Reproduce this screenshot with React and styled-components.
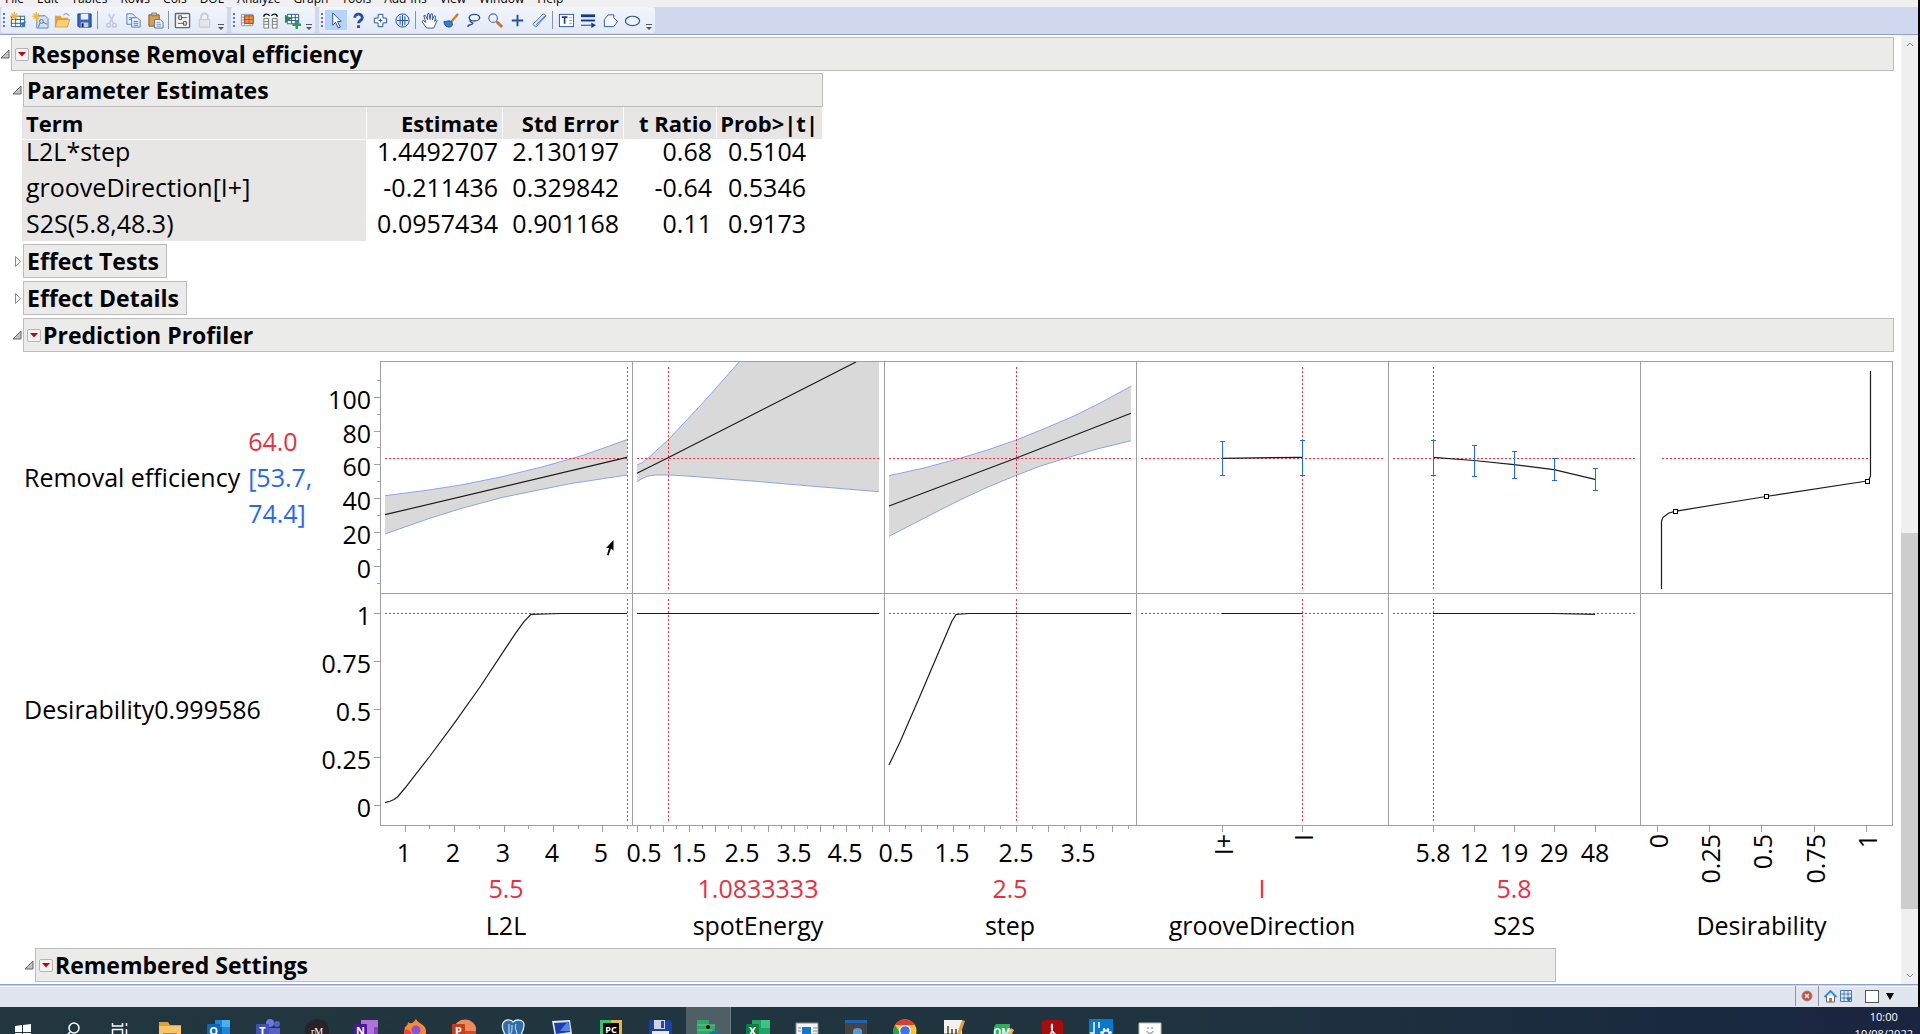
import React from "react";
import styled, { createGlobalStyle, css } from "styled-components";

const ui = `"Open Sans", "Noto Sans", "Liberation Sans", sans-serif`;

const Global = createGlobalStyle`
  * { box-sizing: border-box; }
  body { margin: 0; background: #fff; color: #000; font-family: ${ui}; }
  button { font: inherit; color: inherit; background: none; border: 0; padding: 0; margin: 0; }
`;

const Window = styled.div`
  display: flex;
  flex-direction: column;
  height: 100vh;
  overflow: hidden;
`;
const AppFrame = styled.div`
  flex: 1;
  min-height: 0;
  display: flex;
  flex-direction: column;
  border-right: 2px solid #000;
`;

/* menu and tool bars */
const MenuBar = styled.nav`
  flex: none;
  display: flex;
  align-items: flex-end;
  gap: 13px;
  height: 7px;
  padding-left: 5px;
  overflow: hidden;
  background: #f0f0f0;
`;
const MenuItem = styled.button`
  font-size: 12px;
  line-height: 16px;
`;
const ToolBar = styled.div`
  flex: none;
  display: flex;
  gap: 4px;
  height: 28px;
  padding: 0 1px;
  background: #cfd8ee;
  border-bottom: 1px solid #8f9fd0;
`;
const ToolGroup = styled.div`
  display: flex;
  align-items: center;
  height: 26px;
  background: linear-gradient(#f1f5fc, #e3eaf6);
  border-radius: 3px;
`;
const Grip = styled.span`
  width: 2px;
  height: 14px;
  margin: 0 2px;
  background: repeating-linear-gradient(#6d7a94 0 2px, transparent 2px 4px);
`;
const Divider = styled.span`
  width: 1px;
  height: 18px;
  margin: 0 2px;
  background: #8d93a5;
`;
const ToolButton = styled.button`
  display: grid;
  place-items: center;
  width: 22px;
  height: 20px;
  ${(p) => p.$active && css`background: #b7d3f8;`}
  ${(p) => p.$dim && css`opacity: 0.45;`}
`;
const More = styled.button`
  display: grid;
  place-items: center;
  align-self: flex-end;
  width: 12px;
  height: 12px;
`;

/* report */
const Body = styled.div`
  flex: 1;
  min-height: 0;
  display: flex;
`;
const Report = styled.main`
  flex: 1;
  min-width: 0;
  overflow: hidden;
  padding: 2px 7px 0 0;
`;
const Section = styled.section`
  display: flex;
  flex-direction: column;
  gap: ${(p) => (p.$indent ? 3 : 2)}px;
  padding-left: ${(p) => p.$indent || 0}px;
`;
const Outline = styled.div`
  display: flex;
  align-items: center;
  width: ${(p) => p.$width || "auto"};
`;
const Disclosure = styled.button`
  flex: none;
  display: grid;
  place-items: center end;
  width: 11px;
  height: 20px;
  padding-right: 1px;
`;
const OutlineBar = styled.div`
  flex: ${(p) => (p.$fit ? "none" : 1)};
  display: flex;
  align-items: center;
  gap: 2px;
  height: 34px;
  padding: 0 ${(p) => (p.$fit ? 7 : 3)}px 0 3px;
  background: #ebebea;
  border: 1px solid #bcbcbc;
`;
const Title = styled.h2`
  margin: 0;
  font-size: 23px;
  line-height: 32px;
  font-weight: 700;
  white-space: nowrap;
`;
const RedTriangle = styled.button`
  display: grid;
  place-items: center;
  width: 14px;
  height: 13px;
  border: 1px solid #b4b4b4;
  border-radius: 2px;
  background: #f3f3f3;
`;

const Estimates = styled.table`
  width: 800px;
  margin: -3px 0 0 10px;
  table-layout: fixed;
  border-collapse: separate;
  border-spacing: 0;
  font-size: 25px;
`;
const Head = styled.th`
  height: 33px;
  padding: 1px 4px 1px 0;
  background: #e8e6e4;
  border-left: 1px solid #fff;
  border-bottom: 1px solid #fff;
  font-size: 22px;
  line-height: 30px;
  text-align: right;
  white-space: nowrap;
  &:first-child { text-align: left; padding-left: 4px; border-left: 0; }
`;
const Term = styled.th`
  padding: 7px 0 6px 4px;
  line-height: 23px;
  font-weight: 400;
  text-align: left;
  background: #e8e6e4;
`;
const Value = styled.td`
  padding: 7px ${(p) => (p.$last ? 16 : 4)}px 6px 0;
  line-height: 23px;
  text-align: right;
`;
const Row = styled.tr`
  &:first-child > * { padding-top: 0; }
`;

/* profiler */
const Profiler = styled.div`
  display: grid;
  grid-template-columns: 219px 137px minmax(0, 1fr);
  margin: 6px 1px 1px 12px;
  font-size: 25px;
`;
const Response = styled.div`
  display: flex;
  align-items: center;
  gap: 8px;
  height: 232px;
  line-height: 36px;
  white-space: nowrap;
`;
const Interval = styled.div`
  display: flex;
  flex-direction: column;
`;
const Current = styled.span`
  color: #ee2e3e;
`;
const Bounds = styled.span`
  color: #2468f2;
`;
const LeftLabels = styled.div`
  grid-column: 1;
`;
const Scale = styled.svg`
  display: block;
  width: 100%;
  height: 464px;
  text { font: 25px ${ui}; text-anchor: end; }
  path { stroke: #a0a0a0; }
`;
const Columns = styled.div`
  display: grid;
  grid-template-columns: repeat(6, minmax(0, 1fr));
  padding-right: 1px;
`;
const Column = styled.div`
  &:last-child { margin-right: -1px; }
  &:last-child > svg { border-right: 1px solid #a0a0a0; }
  &:last-child > svg:nth-of-type(3) { border-right: 0; }
`;
const Plot = styled.svg`
  display: block;
  width: 100%;
  height: 232px;
  border: solid #a0a0a0;
  border-width: 1px 0 0 1px;
  * { vector-effect: non-scaling-stroke; }
  .band { fill: #d9d9d9; }
  .edge { fill: none; stroke: #8aa6e8; }
  .fit { fill: none; stroke: #1c1c1c; stroke-width: 1.2; }
  .now { fill: none; stroke: #ee2e3e; stroke-dasharray: 2 2; shape-rendering: crispEdges; }
  .error { fill: none; stroke: #2468f2; shape-rendering: crispEdges; }
  .handle { fill: #fff; stroke: #000; shape-rendering: crispEdges; }
`;
const Axis = styled.svg`
  display: block;
  width: 100%;
  height: 45px;
  overflow: visible;
  border-top: 1px solid #a0a0a0;
  text { font: 25px ${ui}; text-anchor: middle; }
  .turned { text-anchor: end; }
  line { stroke: #a0a0a0; shape-rendering: crispEdges; }
`;
const Factor = styled.div`
  display: flex;
  flex-direction: column;
  align-items: center;
  justify-content: flex-end;
  min-height: 74px;
  line-height: 37px;
  ${(p) => p.$last && css`padding-right: 10px;`}
`;

/* scroll, status and task bars */
const ScrollTrack = styled.div`
  flex: none;
  display: flex;
  flex-direction: column;
  justify-content: space-between;
  align-items: center;
  width: 17px;
  background: #f0f0f0;
`;
const ScrollThumb = styled.div`
  width: 17px;
  height: 376px;
  margin-top: auto;
  margin-bottom: 58px;
  background: #cdcdcd;
`;
const ScrollButton = styled.button`
  flex: none;
  display: grid;
  place-items: center;
  width: 17px;
  height: 17px;
`;
const StatusBar = styled.footer`
  flex: none;
  display: flex;
  justify-content: flex-end;
  align-items: center;
  height: 23px;
  padding-right: 17px;
  background: #e1e5ee;
  border-top: 1px solid #8f9fd0;
  box-shadow: inset 0 1px #c9d1e8, inset 0 2px #f4f6fb;
`;
const StatusCell = styled.div`
  display: flex;
  align-items: center;
  gap: 2px;
  height: 20px;
  padding: 0 4px;
  border-left: 1px solid #8d93a5;
`;
const StatusButton = styled.button`
  display: grid;
  place-items: center;
  width: 14px;
  height: 16px;
`;
const StatusCheck = styled.input`
  appearance: none;
  width: 14px;
  height: 13px;
  margin: 0 2px 0 10px;
  background: #fff;
  border: 1px solid #555;
`;
const TaskBar = styled.div`
  flex: none;
  display: flex;
  justify-content: space-between;
  height: 27px;
  overflow: hidden;
  background: linear-gradient(90deg, #22363f, #20343f 60%, #1a2840 90%, #1a2540);
`;
const Apps = styled.div`
  display: flex;
  gap: 4px;
`;
const AppButton = styled.button`
  width: 45px;
  height: 40px;
  padding-top: 8px;
  ${(p) => p.$active && css`background: #4e6065; border-right: 1px solid #6d7a7e;`}
  svg { display: block; margin: 0 auto; }
`;
const Clock = styled.div`
  display: flex;
  flex-direction: column;
  align-items: center;
  padding: 1px 7px 0 0;
  color: #fff;
  font-size: 11px;
  line-height: 17px;
`;

const Svg = ({ s = 18, children }) => (
  <svg width={s} height={s} viewBox="0 0 18 18" fill="none" aria-hidden="true">{children}</svg>
);
const grid = <path d="M1.500 4.500h14v11h-14zM1.500 8h14M1.500 12h14M6 4.500v11M11 4.500v11" fill="#fff" stroke="#2b5a9e" />;
const spark = <path d="M4.500 0v9M0 4.500h9M1.500 1.500l6 6M7.500 1.500l-6 6" stroke="#f0b53a" strokeWidth="1.300" />;

const tools = {
  newTable: <>{grid}{spark}<path d="M10 12l7-2-3 6z" fill="#1f7ec9" /></>,
  newScript: <><path d="M5 4h9l3 3v10H5z" fill="#cfe0f7" stroke="#5a87bd" />{spark}<circle cx="10" cy="10" r="2" stroke="#667" /><path d="M12 11l4 2M8 12l-1 4" stroke="#667" /></>,
  open: <><path d="M1 4h6l1 2h7v10H1z" fill="#e0a33c" /><path d="M4 8h13l-3 8H1z" fill="#f8cf74" stroke="#c58a2b" strokeWidth=".6" /><path d="M10 3c3-2 5-1 6 1" stroke="#777" /></>,
  save: <><path d="M2 2h14v14H3l-1-1z" fill="#3463c4" stroke="#1c3f93" /><path d="M5 2h8v6H5z" fill="#e9f1fd" /><path d="M5 11h8v5H5z" fill="#c3cbdc" /><path d="M6 12h2v4H6z" fill="#223" /></>,
  cut: <><path d="M6 2l5 10M12 2L7 12" stroke="#8d9bb5" strokeWidth="1.600" /><circle cx="6" cy="14" r="2" stroke="#8d9bb5" strokeWidth="1.500" /><circle cx="12" cy="14" r="2" stroke="#8d9bb5" strokeWidth="1.500" /></>,
  copy: <><path d="M2 2h6l3 3v8H2z" fill="#e7f0fc" stroke="#4f7dbd" /><path d="M7 6h6l3 3v7H7z" fill="#e7f0fc" stroke="#4f7dbd" /><path d="M9 10h5M9 12h5M9 14h5M4 6h3M4 8h3" stroke="#4f7dbd" /></>,
  paste: <><path d="M2 3h11v12H2z" fill="#d99f4a" stroke="#8a5a1d" /><path d="M5 1h5v3H5z" fill="#bbb" stroke="#666" strokeWidth=".7" /><path d="M8 8h6l3 3v6H8z" fill="#f2f6fd" stroke="#55709c" /><path d="M10 11h4M10 13h5M10 15h5" stroke="#7590b8" /></>,
  prefs: <><rect x="1.500" y="1.500" width="15" height="15" rx="1" fill="#fafafa" stroke="#666" strokeWidth="1.500" /><path d="M4 6h10M4 12h10" stroke="#555" /><path d="M5 4h3v4H5zM10 10h3v4h-3z" fill="#ddd" stroke="#555" /></>,
  lock: <><path d="M5.500 8V5a3.500 3.500 0 017 0v3" stroke="#9a9a9a" strokeWidth="1.700" /><path d="M3.500 8h11v8h-11z" fill="#ddd" stroke="#9a9a9a" /></>,
  subset: <><path d="M1.500 2.500h12v12h-12zM1.500 5.500h12M1.500 8.500h12M1.500 11.500h12M4.500 2.500v12M10.500 2.500v12" fill="#fff" stroke="#8a98b5" /><rect x="5" y="4" width="9" height="8" fill="#f0913e" stroke="#a33f12" /><path d="M9.500 4v8M5 8h9" stroke="#c3561c" /></>,
  join: <><path d="M2 7h5v10H2zM11 7h5v10h-5z" fill="#fff" stroke="#777" /><path d="M2 10h5M2 13h5M11 10h5M11 13h5" stroke="#777" /><path d="M2 5c0-4 5-3 6-1M16 5c0-4-5-3-6-1" stroke="#111" strokeWidth="1.500" /></>,
  addGraph: <><path d="M3.500 2.500h12v10h-12zM3.500 6h12M3.500 9h12M8 2.500v10M12 2.500v10" fill="#fff" stroke="#2b5a9e" /><path d="M1 3l7 4-7 5z" fill="#2c8a57" /><path d="M13.500 9v9M9 13.500h9" stroke="#2f9a4d" strokeWidth="2.600" /></>,
  arrow: <path d="M5 1v13l3-3 3 6 2-1-3-6h4z" fill="#fff" stroke="#1c4e9d" />,
  help: <path d="M5 6c0-5 8-5 8 0 0 3-4 3-4 6M9 14v3" stroke="#1f4fa8" strokeWidth="3" />,
  plusBox: <path d="M6.500 2.500h5v4h4v5h-4v4h-5v-4h-4v-5h4z M7 9h4M9 7v4" fill="#fff" stroke="#1f4fa8" />,
  globe: <><circle cx="9" cy="9" r="7" fill="#e5edfb" stroke="#1f4fa8" /><path d="M9 3v12M3 9h12M6.500 4.500v9M11.500 4.500v9" stroke="#1f4fa8" /></>,
  hand: <path d="M6 17l-5-7 1.500-1L5 11 3 4l1.500-.5L7 8V2l1.500-.5L9.500 8l1-6H12v6.500L14 4l1.500.5L14.500 10l1.500-2 1 1-3.500 8z" fill="#fff" stroke="#2b57a5" />,
  brush: <><path d="M9 10l7-8" stroke="#c8842e" strokeWidth="2.500" /><path d="M1 10c3 1 4-2 8 0 2 3 1 6-3 6-3 0-5-3-5-6z" fill="#2f7fd6" stroke="#1c4e9d" /></>,
  lasso: <><ellipse cx="10" cy="6" rx="5.500" ry="3.500" stroke="#2b4f9e" strokeWidth="1.500" /><path d="M5 8c0 4 6 3 2 5-2 1-4 0-4 3" stroke="#2b4f9e" strokeWidth="1.500" /></>,
  zoom: <><circle cx="6.500" cy="6.500" r="4.500" fill="#eaf3fd" stroke="#5577a5" strokeWidth="1.300" /><path d="M10 10l6 6" stroke="#c8702e" strokeWidth="3" /></>,
  cross: <path d="M9 3v12M3 9h12" stroke="#1f4fa8" strokeWidth="2" />,
  ruler: <path d="M2 13L13 2l3 2L5 16z M5 14L15 4" fill="#dbe7fa" stroke="#4a74ba" />,
  textBox: <><rect x="1.500" y="2.500" width="15" height="13" fill="#fff" stroke="#2b57a5" /><path d="M4 5.500h6M7 5.500v7" stroke="#1c3f93" strokeWidth="1.800" /><path d="M12 6h3M12 9h3M12 12h3" stroke="#8aa3cf" /></>,
  lines: <><path d="M1 4h15" stroke="#123a8a" strokeWidth="3" /><path d="M1 9h15" stroke="#123a8a" strokeWidth="2" /><path d="M1 14h12" stroke="#123a8a" /><path d="M12 11l5 3-5 3z" fill="#123a8a" /></>,
  polygon: <path d="M2.500 15.500V8l4-5h6v3l4 4-4 5.500z" fill="#f4f8fe" stroke="#2b57a5" />,
  oval: <ellipse cx="9" cy="9.500" rx="7.500" ry="5" fill="#eef4fd" stroke="#2b57a5" strokeWidth="1.300" />,
};

const Tool = ({ name, ...rest }) => (
  <ToolButton type="button" aria-label={name} {...rest}><Svg s={17}>{tools[name]}</Svg></ToolButton>
);
const Overflow = () => (
  <More type="button" aria-label="More buttons">
    <svg width="8" height="8"><path d="M1 1.500h6" stroke="#555" /><path d="M1 4h6L4 7z" fill="#555" /></svg>
  </More>
);

const OutlineRow = ({ title, closed, menu, fit, width }) => (
  <Outline $width={width}>
    <Disclosure type="button" aria-label={`Toggle ${title}`}>
      {closed ? (
        <svg width="8" height="13"><path d="M1.500 1.500v10l5-5z" fill="#fff" stroke="#8a8a8a" /></svg>
      ) : (
        <svg width="10" height="10"><path d="M1 9h8V1z" fill="#bfc3c3" stroke="#666" /></svg>
      )}
    </Disclosure>
    <OutlineBar $fit={fit}>
      {menu && (
        <RedTriangle type="button" aria-label={`${title} options`}>
          <svg width="8" height="5"><path d="M0 0h8L4 4.500z" fill="#b40c0c" /></svg>
        </RedTriangle>
      )}
      <Title>{title}</Title>
    </OutlineBar>
  </Outline>
);

const estimates = [
  ["L2L*step", "1.4492707", "2.130197", "0.68", "0.5104"],
  ["grooveDirection[I+]", "-0.211436", "0.329842", "-0.64", "0.5346"],
  ["S2S(5.8,48.3)", "0.0957434", "0.901168", "0.11", "0.9173"],
];

/* Plot coordinates: each cell is 252 x 232 units, measured from its border. */
const every = (first, step, count) => Array.from({ length: count }, (_, i) => first + step * i);
const L = (points) => "M" + points.map((p) => p.join(" ")).join("L");

const factors = [
  {
    name: "L2L", value: "5.5", now: 247.500,
    upper: [[5, 134.700], [44, 129.700], [81, 124], [122, 115.700], [163, 105.700], [204, 94], [247, 78.700]],
    lower: [[5, 173], [49, 157.500], [81, 147.500], [122, 136.500], [151, 130.500], [191, 122.500], [247, 114]],
    fit: [[5, 153.700], [247, 96.300]],
    desire: [[5, 209.700], [10, 208.300], [14, 206.500], [18, 203.500], [25, 195], [50, 163], [74, 130.700], [100, 94], [124, 57.700], [136, 39.700], [144, 28.700], [151, 21.300], [165, 21], [180, 20.500], [247, 20.500]],
    major: every(25.500, 49.250, 5), minor: every(49.500, 49.500, 5),
    labels: [[24, "1"], [73, "2"], [123, "3"], [172, "4"], [221, "5"]],
  },
  {
    name: "spotEnergy", value: "1.0833333", now: 36.500,
    upper: [[5, 104], [10, 101.700], [16, 97.300], [37, 78], [71, 41.700], [108, 0], [247, 0]],
    lower: [[5, 120.700], [10, 117.700], [16, 115], [24, 114], [39, 114], [59, 115.300], [120, 120], [182, 125.300], [247, 130.700]],
    fit: [[5, 112.300], [37, 96.300], [224, 1]],
    desire: [[5, 20.500], [247, 20.500]],
    major: every(5.500, 26.120, 10), minor: every(18.500, 26.120, 9),
    labels: [[12, "0.5"], [57, "1.5"], [110, "2.5"], [162, "3.5"], [213, "4.5"]],
  },
  {
    name: "step", value: "2.5", now: 132.500,
    upper: [[5, 114.700], [40, 107], [76, 97.300], [105, 88.500], [133, 78.700], [160, 67.800], [190, 55], [218, 41], [247, 25.300]],
    lower: [[5, 175.300], [56, 149], [80, 137], [105, 125.500], [133, 114], [155, 105.500], [179, 98], [213, 88], [247, 79.700]],
    fit: [[5, 145], [133, 96.700], [247, 52.300]],
    desire: [[5, 172], [16, 149], [36, 103], [56, 56], [68, 28], [72, 21.500], [85, 20.500], [247, 20.500]],
    major: every(5.500, 31.800, 8), minor: every(21.500, 31.800, 8),
    labels: [[12, "0.5"], [68, "1.5"], [132, "2.5"], [194, "3.5"]],
  },
  {
    name: "grooveDirection", value: "I", now: 166.500, turned: true,
    bars: [[86.500, 80.500, 114.500], [166.500, 79.500, 114.500]],
    fit: [[86, 97.300], [166, 96.300]],
    desire: [[86, 20.500], [166, 20.500]],
    major: [86.500, 166.500], minor: [], labels: [[86, "I+"], [166, "I"]],
  },
  {
    name: "S2S", value: "5.8", now: 45.500,
    bars: [[45.500, 79.500, 114.500], [86.500, 84.500, 115.500], [126.500, 90.500, 117.500], [166.500, 97.500, 119.500], [207.500, 107.500, 129.500]],
    fit: [[45, 96.300], [86, 99.500], [126, 103.700], [166, 108.700], [207, 118.300]],
    desire: [[45, 20.500], [166, 20.500], [207, 21.300]],
    major: [45.500, 86.500, 126.500, 166.500, 207.500], minor: [],
    labels: [[45, "5.8"], [86, "12"], [126, "19"], [166, "29"], [207, "48"]],
  },
  {
    name: "Desirability", turned: true,
    curve: [[230.500, 10], [230.500, 115], [229, 118.500], [227, 120], [126, 135.500], [35, 150.300], [29, 152], [23, 156.300], [21.500, 160], [21.500, 228]],
    handles: [[227, 120.500], [126, 135.500], [35, 150.500]],
    major: [17.500, 69.500, 121.500, 173.500, 225.500], minor: [],
    labels: [[17, "0"], [69, "0.25"], [121, "0.5"], [173, "0.75"], [225, "1"]],
  },
];

const pct = (x) => `${(x / 252) * 100}%`;
const box = { viewBox: "1 1 251 231", preserveAspectRatio: "none", "aria-hidden": true };

const FactorColumn = ({ f }) => (
  <Column>
    <Plot {...box}>
      {f.upper && <path className="band" d={L([...f.upper, ...[...f.lower].reverse()]) + "Z"} />}
      {f.upper && <path className="edge" d={L(f.upper) + L(f.lower)} />}
      <path className="now" d={f.curve ? "M22 97.500H230" : "M5 97.500H247"} />
      {f.now && <path className="now" d={`M${f.now} 6V228`} />}
      {f.fit && <path className="fit" d={L(f.fit)} />}
      {f.curve && <path className="fit" d={L(f.curve)} />}
      {f.bars && f.bars.map(([x, a, b]) => (
        <path key={x} className="error" d={`M${x} ${a}V${b}M${x - 2.5} ${a}h5M${x - 2.5} ${b}h5`} />
      ))}
      {f.handles && f.handles.map(([x, y]) => (
        <rect key={x} className="handle" x={x - 2} y={y - 2} width="4" height="4" />
      ))}
      {f.name === "L2L" && <path d="M233.500 179v10.500l-2.500-2-2.500 7-1.500-.5 2-7h-3z" fill="#000" />}
    </Plot>
    <Plot {...box}>
      {f.desire && <path className="now" d="M5 20.500H247" />}
      {f.now && <path className="now" d={`M${f.now} 6V228`} />}
      {f.desire && <path className="fit" d={L(f.desire)} />}
    </Plot>
    <Axis>
      {f.major.map((x) => <line key={x} x1={pct(x)} x2={pct(x)} y1="0" y2="6" />)}
      {f.minor.map((x) => <line key={x} x1={pct(x)} x2={pct(x)} y1="0" y2="3" />)}
      {f.labels.map(([x, t]) => f.turned ? (
        <svg key={t} x={pct(x)} y="8" overflow="visible">
          <text className="turned" transform="rotate(-90)" x="0" y="11">{t}</text>
        </svg>
      ) : (
        <text key={t} x={pct(x)} y="36">{t}</text>
      ))}
    </Axis>
    <Factor $last={!f.value}>
      {f.value && <Current>{f.value}</Current>}
      <span>{f.name}</span>
    </Factor>
  </Column>
);

const effTicks = [["100", 36.500], ["80", 70.500], ["60", 103.500], ["40", 137.500], ["20", 171.500], ["0", 205.500]];
const effMinor = [19.500, 53.500, 86.500, 120.500, 154.500, 188.500, 222.500];
const desTicks = [["1", 252.500], ["0.75", 300.500], ["0.5", 348.500], ["0.25", 396.500], ["0", 444.500]];

const tile = (bg, t, fg = "#fff") => (
  <><rect x="0" y="5" width="13" height="13" rx="1" fill={bg} /><text x="6.500" y="16" fill={fg} fontSize="11" fontWeight="700" textAnchor="middle" fontFamily="Noto Sans, sans-serif">{t}</text></>
);
const apps = [
  ["Start", <path d="M4 7l7-1v7H4zM12 6l8-1v8h-8zM4 14h7v7l-7-1zM12 14h8v8l-8-1z" fill="#fff" />],
  ["Search", <><circle cx="14" cy="9" r="5" fill="none" stroke="#fff" strokeWidth="1.500" /><path d="M10 13l-7 8" stroke="#fff" strokeWidth="1.500" /></>],
  ["Task View", <path d="M3.500 4v3h10V4M3.500 10.500h10v7h-10zM17.500 4v3M17.500 10v9M3 20.500h10" fill="none" stroke="#fff" strokeWidth="1.500" />],
  ["File Explorer", <><path d="M1 3h9l2 3h11v18H1z" fill="#e0a030" /><path d="M1 7h22v17H1z" fill="#fac46a" /><path d="M5 14h14v10h-4v-5H9v5H5z" fill="#3d9be8" /></>],
  ["Outlook", <><path d="M8 1h15v22H8z" fill="#1e88d8" /><path d="M15 1h8v7h-8z" fill="#4ab0ee" /><path d="M8 8h7v7H8z" fill="#1060ac" />{tile("#0f64b8", "O")}</>],
  ["Teams", <><circle cx="14" cy="4" r="4" fill="#6c78dc" /><circle cx="21" cy="5" r="3" fill="#5560c8" /><path d="M8 9h16v12H8z" fill="#5560c8" />{tile("#4450b4", "T")}<circle cx="19" cy="20" r="6" fill="#e23b3b" /><path d="M18 18l2-1v7" fill="none" stroke="#fff" strokeWidth="1.500" /></>],
  ["rM", <><circle cx="12" cy="12" r="12" fill="#262424" /><text x="12" y="16" fill="#fff" fontSize="10" textAnchor="middle" fontFamily="Liberation Serif, serif">rM</text></>],
  ["OneNote", <><path d="M7 1h17v23H7z" fill="#b073dc" /><path d="M20 8h4v8h-4z" fill="#8a44c0" />{tile("#4b1a9c", "N")}</>],
  ["Firefox", <><path d="M2 8c2-1 3-3 3-5 3 3 6 0 8-3 2 5 11 5 10 14-1 12-21 12-22 0z" fill="#fb8a2c" /><path d="M1 12c2-2 4-2 6 0 2 5 8 5 12 2-1 10-17 12-18-2z" fill="#f83a4c" /><circle cx="13" cy="11" r="4.500" fill="#8654d8" /></>],
  ["PowerPoint", <><circle cx="13" cy="12" r="11.500" fill="#f08a58" /><path d="M13 12h11.500a11.500 11.500 0 01-23 0z" fill="#d44a27" />{tile("#c43e1c", "P")}</>],
  ["pgAdmin", <><path d="M2 4c3-5 9-3 10-1 3-3 11-3 11 3 0 5-3 10-5 13l-4-2v7h-4l-1-7c-5 2-9-8-7-13z" fill="#2f6ea8" stroke="#dfe9f2" strokeWidth="1.300" /><path d="M8 5v10c3 0 3-3 3-9M15 5c-2 4 1 7 1 11" fill="none" stroke="#dfe9f2" /></>],
  ["Remote Desktop", <><path d="M2 2l18-1 2 14-17 3z" fill="#e3e7f0" /><path d="M4 4l15-1 1 10-14 2z" fill="#1c3fb0" /><path d="M10 12l8-10 2 10z" fill="#4f86e8" /><circle cx="18" cy="20" r="5" fill="#c5d8cc" /></>],
  ["PyCharm", <><path d="M1 1h14L8 24H1z" fill="#38c172" /><path d="M12 1h11v20l-8 3z" fill="#e6b84a" /><rect x="4" y="4" width="16" height="18" fill="#000" /><text x="12" y="14" fill="#fff" fontSize="9" fontWeight="700" textAnchor="middle" fontFamily="Noto Sans, sans-serif">PC</text><path d="M6 19h6" stroke="#fff" strokeWidth="1.500" /></>],
  ["Backup", <><path d="M1 1h21l2 3v20H1z" fill="#1d3fa8" /><path d="M6 1h11v9H6z" fill="#cfd4dd" /><path d="M13 2h3v7h-3z" fill="#2346b4" /><path d="M4 12h17v12H4z" fill="#f6e9c4" /><path d="M6 16h13M6 19h13" stroke="#caa" /></>],
  ["JMP", <><path d="M1 1h12v5h6v8h-5v10H1z" fill="#2fa866" /><path d="M1 6h18M1 11h15M1 16h12" stroke="#5fd08e" /><circle cx="12" cy="8" r="2" fill="#000" /><path d="M10 16l7-4 7 1-5 3-1 8-3-6z" fill="#1d6fae" /></>],
  ["Excel", <><path d="M6 1h18v23H6z" fill="#21a366" /><path d="M15 1h9v8h-9z" fill="#38c481" /><path d="M6 16h18v8H6z" fill="#185c37" />{tile("#107c41", "X")}</>],
  ["Reader", <><path d="M1 4h22v20H1z" fill="#f4f4f4" stroke="#888" /><path d="M7 8h9v12H7z" fill="#1277d4" /><path d="M18 9h4M18 12h4M18 15h4M3 9h3M3 12h3" stroke="#888" /></>],
  ["Python IDE", <><path d="M1 1h22v23H1z" fill="#444" /><path d="M1 1h22v3H1z" fill="#1d63b4" /><path d="M9 12c0-4 9-4 9 0v5h-8v5H7c-3-4 0-7 2-7z" fill="#5b99d4" /><path d="M23 15c2 7-2 8-5 8h-6v-5h7v-3z" fill="#f5c94a" /></>],
  ["Chrome", <><circle cx="12" cy="12" r="11.500" fill="#f9c62c" /><path d="M2 6a11.500 11.500 0 0120 0H12z" fill="#de3c30" /><path d="M2 6a11.500 11.500 0 009 17.500l4-8-9-3z" fill="#2ca04e" /><circle cx="12" cy="12" r="6" fill="#fff" /><circle cx="12" cy="12" r="4.800" fill="#3b74ee" /></>],
  ["Notepad++", <><path d="M2 1h18v23H2z" fill="#f2f2ec" /><path d="M2 14h16v10H2z" fill="#c9b23f" /><path d="M6 7v9M10 10v6M14 10v6" stroke="#444" strokeWidth="1.500" /><path d="M13 21l7-20 3 1-7 20z" fill="#e89c34" /></>],
  ["QM", <><path d="M5 5h14v19H3V8z" fill="#2fae5c" /><text x="11" y="17" fill="#fff" fontSize="10" fontWeight="700" textAnchor="middle" fontFamily="Noto Sans, sans-serif">QM</text><path d="M13 22l7-13 3 2-7 13z" fill="#efb556" /></>],
  ["Acrobat", <><rect x="2" y="1" width="21" height="26" rx="3" fill="#a80c0c" /><path d="M12 5c-2 7 3 12 8 12-5-3-11 0-14 3 5-2 7-9 6-15z" fill="none" stroke="#fff" strokeWidth="1.700" /></>],
  ["Update", <><path d="M0 0h24v24H0z" fill="#0878d0" /><path d="M5 3v11H2l6 6 4-4M10 9V3" fill="none" stroke="#fff" strokeWidth="1.500" /><circle cx="17" cy="15" r="3.500" fill="none" stroke="#fff" strokeWidth="2" /><circle cx="17" cy="15" r="5" fill="none" stroke="#fff" strokeWidth="2" strokeDasharray="2 2" /></>],
  ["Whiteboard", <><path d="M1 4h22v14H1z" fill="#fff" stroke="#bbb" /><path d="M10 8v2M14 8v2M9 12c0 3 6 3 6 0" fill="none" stroke="#777" /><path d="M10 18h5v6h-5z" fill="#bbb" /></>],
];

export default function App() {
  return (
    <Window>
      <Global />
      <AppFrame>
        <MenuBar aria-label="Main menu">
          {["File", "Edit", "Tables", "Rows", "Cols", "DOE", "Analyze", "Graph", "Tools", "Add-Ins", "View", "Window", "Help"].map((m) => (
            <MenuItem key={m} type="button">{m}</MenuItem>
          ))}
        </MenuBar>
        <ToolBar role="toolbar">
          <ToolGroup>
            <Grip />
            {["newTable", "newScript", "open", "save"].map((n) => <Tool key={n} name={n} />)}
            <Divider />
            <Tool name="cut" $dim /><Tool name="copy" /><Tool name="paste" />
            <Divider />
            <Tool name="prefs" /><Tool name="lock" $dim />
            <Overflow />
          </ToolGroup>
          <ToolGroup>
            <Grip />
            {["subset", "join", "addGraph"].map((n) => <Tool key={n} name={n} />)}
            <Overflow />
          </ToolGroup>
          <ToolGroup>
            <Grip />
            <Tool name="arrow" $active />
            {["help", "plusBox", "globe"].map((n) => <Tool key={n} name={n} />)}
            <Divider />
            {["hand", "brush", "lasso", "zoom", "cross", "ruler"].map((n) => <Tool key={n} name={n} />)}
            <Divider />
            {["textBox", "lines", "polygon", "oval"].map((n) => <Tool key={n} name={n} />)}
            <Overflow />
          </ToolGroup>
        </ToolBar>
        <Body>
          <Report>
            <Section>
              <OutlineRow title="Response Removal efficiency" menu />
              <Section $indent={12}>
                <OutlineRow title="Parameter Estimates" width="811px" />
                <Estimates>
                  <colgroup>
                    <col style={{ width: 344 }} /><col style={{ width: 136 }} /><col style={{ width: 121 }} /><col style={{ width: 93 }} /><col />
                  </colgroup>
                  <thead>
                    <tr>{["Term", "Estimate", "Std Error", "t Ratio", "Prob>|t|"].map((h) => <Head key={h} scope="col">{h}</Head>)}</tr>
                  </thead>
                  <tbody>
                    {estimates.map(([term, ...values]) => (
                      <Row key={term}>
                        <Term scope="row">{term}</Term>
                        {values.map((v, i) => <Value key={i} $last={i === 3}>{v}</Value>)}
                      </Row>
                    ))}
                  </tbody>
                </Estimates>
                <OutlineRow title="Effect Tests" closed fit />
                <OutlineRow title="Effect Details" closed fit />
                <OutlineRow title="Prediction Profiler" menu />
                <Profiler>
                  <LeftLabels>
                    <Response>
                      <span>Removal efficiency</span>
                      <Interval>
                        <Current>64.0</Current>
                        <Bounds>[53.7,</Bounds>
                        <Bounds>74.4]</Bounds>
                      </Interval>
                    </Response>
                    <Response><span>Desirability0.999586</span></Response>
                  </LeftLabels>
                  <Scale>
                    {effTicks.concat(desTicks).map(([t, y]) => <text key={t + y} x="128" y={y + 11}>{t}</text>)}
                    {effTicks.concat(desTicks).map(([, y]) => <path key={y} d={`M131 ${y}h6`} />)}
                    {effMinor.map((y) => <path key={y} d={`M134 ${y}h3`} />)}
                  </Scale>
                  <Columns>{factors.map((f) => <FactorColumn key={f.name} f={f} />)}</Columns>
                </Profiler>
                <Section $indent={12}>
                  <OutlineRow title="Remembered Settings" menu width="1532px" />
                </Section>
              </Section>
            </Section>
          </Report>
          <ScrollTrack>
            <ScrollButton type="button" aria-label="Scroll up"><svg width="8" height="6"><path d="M1 5l3-3 3 3" fill="none" stroke="#888" /></svg></ScrollButton>
            <ScrollThumb />
            <ScrollButton type="button" aria-label="Scroll down"><svg width="8" height="6"><path d="M1 1l3 3 3-3" fill="none" stroke="#888" /></svg></ScrollButton>
          </ScrollTrack>
        </Body>
        <StatusBar>
          <StatusCell>
            <StatusButton type="button" aria-label="Errors"><svg width="12" height="12"><circle cx="6" cy="6" r="5" fill="#d8472b" stroke="#8f9098" /><path d="M4 4l4 4M8 4l-4 4" stroke="#fff" strokeWidth="1.500" /></svg></StatusButton>
          </StatusCell>
          <StatusCell>
            <StatusButton type="button" aria-label="Home"><svg width="13" height="13"><path d="M2.500 6v6h8V6" fill="#fff" stroke="#666" /><path d="M.5 7l6-6 6 6" fill="none" stroke="#2b8ad8" strokeWidth="1.800" /><path d="M5 8h3v4H5z" fill="#b07a34" /></svg></StatusButton>
            <StatusButton type="button" aria-label="Data table"><svg width="12" height="12"><path d="M.5.5h11v11H.5zM.5 4h11M.5 8h11M4 .5v11M8 .5v11" fill="#e8f1fd" stroke="#4a78bd" /><path d="M6 8l6-1-3 5z" fill="#1f7ec9" /></svg></StatusButton>
            <StatusCheck type="checkbox" aria-label="Selected window" />
            <StatusButton type="button" aria-label="Window list"><svg width="8" height="8"><path d="M0 1h8L4 8z" fill="#000" /></svg></StatusButton>
          </StatusCell>
        </StatusBar>
      </AppFrame>
      <TaskBar>
        <Apps>
          {apps.map(([name, icon]) => (
            <AppButton key={name} type="button" aria-label={name} $active={name === "JMP"}>
              <svg width="24" height="24" viewBox="0 0 24 24">{icon}</svg>
            </AppButton>
          ))}
        </Apps>
        <Clock><span>10:00</span><span>10/08/2022</span></Clock>
      </TaskBar>
    </Window>
  );
}
